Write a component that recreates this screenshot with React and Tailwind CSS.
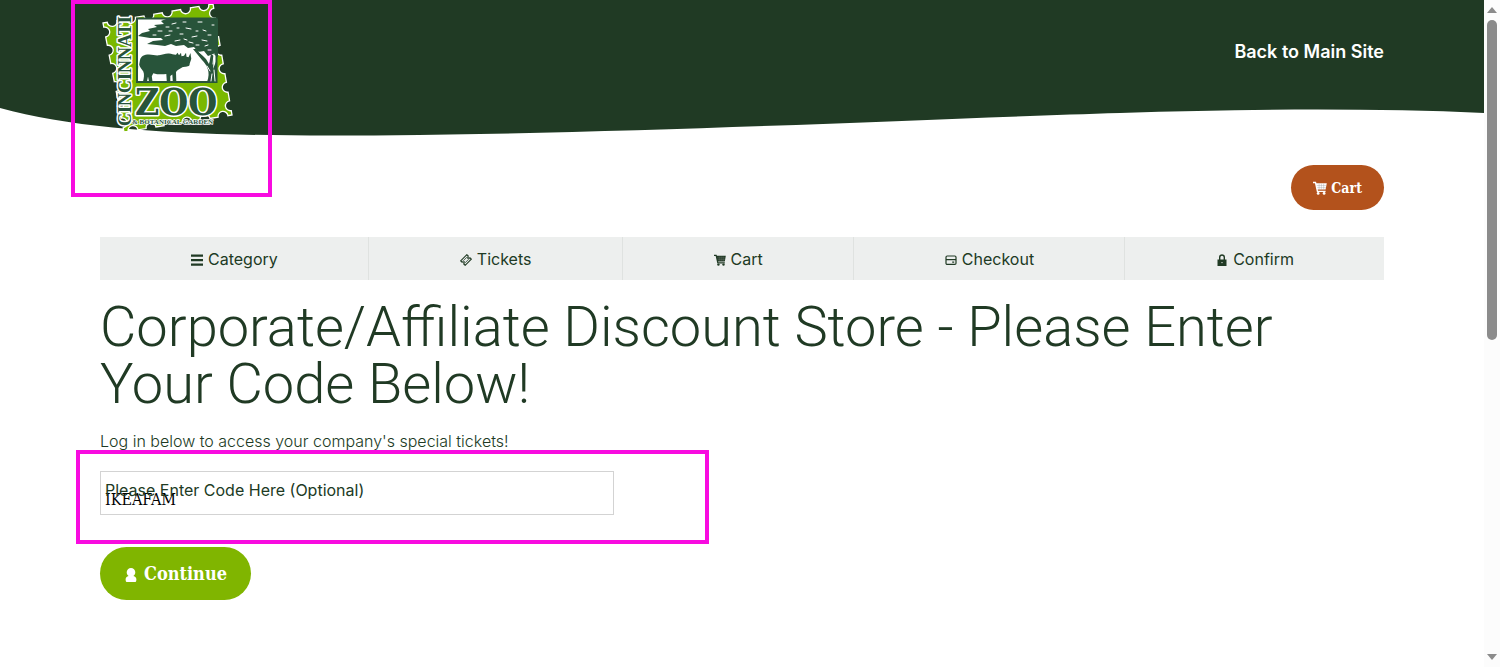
import React, { useState } from "react";

const steps = [
  { label: "Category", icon: MenuIcon },
  { label: "Tickets", icon: TicketIcon },
  { label: "Cart", icon: CartIcon },
  { label: "Checkout", icon: CardIcon },
  { label: "Confirm", icon: LockIcon },
];

// Builds the outline of a postage stamp: straight edges with round bites
function stampPath(corners, bites, radius) {
  let d = `M${corners[0][0]} ${corners[0][1]}`;
  corners.forEach(([x1, y1], i) => {
    const [x2, y2] = corners[(i + 1) % corners.length];
    const length = Math.hypot(x2 - x1, y2 - y1);
    const ux = (x2 - x1) / length;
    const uy = (y2 - y1) / length;
    for (let n = 0; n < bites; n++) {
      const mid = ((n + 0.5) * length) / bites;
      const a = mid - radius;
      const b = mid + radius;
      d += `L${x1 + ux * a} ${y1 + uy * a}`;
      d += `A${radius} ${radius} 0 0 0 ${x1 + ux * b} ${y1 + uy * b}`;
    }
    d += `L${x2} ${y2}`;
  });
  return d + "Z";
}

const stamp = stampPath(
  [
    [3, 23],
    [113, 4],
    [132, 115],
    [24, 132],
  ],
  6,
  5
);

function MenuIcon({ className }) {
  return (
    <svg viewBox="0 0 12 12" className={className} fill="currentColor">
      <path d="M0 .5h12v2.200H0zM0 5h12v2.200H0zM0 9.500h12v2.200H0z" />
    </svg>
  );
}

function TicketIcon({ className }) {
  return (
    <svg
      viewBox="0 0 14 14"
      className={className}
      fill="none"
      stroke="currentColor"
      strokeWidth="1.300"
    >
      <path d="M.8 8 8 .8l1.600 1.600a1.400 1.400 0 0 0 2 2L13.200 6 6 13.200l-1.600-1.600a1.400 1.400 0 0 0-2-2z" />
      <path d="M4 7.800 7.800 4 10 6.200 6.200 10z" strokeWidth=".9" />
    </svg>
  );
}

function CartIcon({ className }) {
  return (
    <svg viewBox="0 0 13 13" className={className} fill="currentColor">
      <path d="M0 .8h2.800l.4 1.200h9.600L11.700 8H4.400l.3 1h7v1.200H3.600L1.800 2.200H0z" />
      <circle cx="4.800" cy="11.500" r="1.300" />
      <circle cx="10.300" cy="11.500" r="1.300" />
      <path
        d="M3.500 4.200h8.500M4 6.100h8M5.700 2.500v5.500M7.800 2.500v5.500M9.900 2.500v5.500"
        stroke="#8f8f8f"
        strokeOpacity=".6"
        strokeWidth=".5"
      />
    </svg>
  );
}

function CardIcon({ className }) {
  return (
    <svg
      viewBox="0 0 12 12"
      className={className}
      fill="none"
      stroke="currentColor"
      strokeWidth="1.200"
    >
      <rect x="1" y="2" width="10" height="8.400" rx="1.200" />
      <path d="M1 5.600h10M7.200 8.200h2" />
    </svg>
  );
}

function LockIcon({ className }) {
  return (
    <svg viewBox="0 0 12 12" className={className} fill="currentColor">
      <path d="M1.500 5.500h9V12h-9z" />
      <path
        d="M3.700 6V3.300a2.300 2.300 0 0 1 4.600 0V6"
        fill="none"
        stroke="currentColor"
        strokeWidth="1.400"
      />
      <circle cx="6" cy="8.600" r=".7" fill="#edefee" />
    </svg>
  );
}

function UserIcon({ className }) {
  return (
    <svg viewBox="0 0 12 14" className={className} fill="currentColor">
      <path d="M6 0a4.300 4.300 0 0 1 4.300 4.300c0 1.600-.8 2.900-1.900 3.700 1.900.6 3 1.800 3 3.500 0 1-.4 2.500-1 2.500H1.600c-.6 0-1-1.500-1-2.500 0-1.700 1.100-2.900 3-3.500-1.100-.8-1.900-2.100-1.900-3.700A4.300 4.300 0 0 1 6 0z" />
    </svg>
  );
}

function ZooLogo() {
  return (
    <svg
      width="140"
      height="136"
      viewBox="0 0 140 136"
      role="img"
      aria-label="Cincinnati Zoo & Botanical Garden"
    >
      <path d={stamp} fill="#7ab800" stroke="#fff" strokeWidth="1.300" />

      {/* Picture panel */}
      <rect
        x="37"
        y="18.500"
        width="79.500"
        height="63.500"
        fill="#fff"
        stroke="#28543a"
        strokeWidth="2"
      />
      {/* Acacia canopy */}
      <g fill="#28543a">
        <path d="M38 36 42 33 50 31 48 29 57 27 54 25 64 24 61 21 66 19H118V57L113 54 108 56 104 51 98 52 94 47 88 48 84 45 76 46 71 44 65 46 57 45 47 44 53 41 63 40 61 38 50 38Z" />
        <path d="M107 82C111 72 107 65 102 60L93 49 96 49 106 59 109 64 111 54 114 56 113 69 117 59V82Z" />
      </g>
      <g stroke="#fff" fill="none" strokeLinecap="round">
        <path
          d="M58 31h4M72 24l4-1M86 28l5 1M65 36l5-1M80 34h3M92 37l5-1M103 30l3 1M98 22h4M75 41l5-1M89 42l4 1M102 40l5 1M105 46l3-1M83 22h3M112 25h2M108 35h3M96 45h3M69 31h3M84 39l3 1M77 28h2M96 31h2M108 50h3M53 35h3M66 27h3"
          strokeWidth="1"
        />
        <path
          d="M99 52 107 58M104 53 109 61M111 81 112 74M115 81 114 70M114 54 113 64M107 66 110 71"
          strokeWidth="1"
        />
      </g>
      {/* Rhino */}
      <path
        d="M40 60c1-4 4-5.500 9-5.500 4 0 6 1.200 10 .8 4-.8 6-2 10-1.800 3 .2 5 1.500 7 1.200l1.500-2 1.500 2.500 2-2.500.5 3.500 2.500-.5 2-3 .5 4 2 .5 2-4.200.5 4.200c1 2-1 4-1.500 8-2 2.300-5 .8-7.500 2.300-3 2-5 2.500-6 4.500l.3 9.500h-3.500l-.5-7-2 1.500v5.500h-3.500l-.5-7.500c-4 .5-9 .6-13-.8l-1.500 3 .7 5.300h-3.500l-1-5-1 5h-4c1-4 1.500-7 .3-10-2-3-3.500-4-3.800-7l-1.200 5z"
        fill="#28543a"
      />

      {/* Lettering */}
      <g
        fill="#28543a"
        stroke="#fff"
        paintOrder="stroke"
        strokeLinejoin="round"
        fontWeight="700"
      >
        <text
          x="35"
          y="115"
          fontSize="37"
          strokeWidth="3"
          fontFamily="'DejaVu Serif Condensed', 'DejaVu Serif', serif"
        >
          ZOO
        </text>
        <text
          transform="translate(31 126) rotate(-90)"
          fontSize="18"
          strokeWidth="3"
          fontFamily="'Liberation Serif', serif"
        >
          CINCINNATI
        </text>
        <text
          x="32"
          y="124"
          fontSize="7"
          strokeWidth="1.500"
          fontFamily="'Liberation Serif', serif"
        >
          &amp; BOTANICAL GARDEN
        </text>
      </g>
    </svg>
  );
}

function Header() {
  return (
    <header className="relative flex h-[136px] items-start justify-between px-[100px]">
      <svg
        className="absolute inset-0 h-full w-full"
        viewBox="0 0 1484 136"
        preserveAspectRatio="none"
        aria-hidden="true"
      >
        <path
          d="M0 0H1484V113C1370 108 1250 109 1120 113C920 119 600 135.500 330 135.500C190 135.500 80 130 0 108Z"
          fill="#203a24"
        />
      </svg>
      <a href="#home" className="relative">
        <ZooLogo />
      </a>
      <a
        href="#main"
        className="relative mt-10 text-lg leading-6 font-semibold text-white"
      >
        Back to Main Site
      </a>
      <div className="pointer-events-none absolute top-0 left-[71px] h-[197px] w-[201px] border-4 border-[#f80be0]" />
    </header>
  );
}

function Steps() {
  return (
    <nav aria-label="Order steps" className="mt-[27px]">
      <ol className="flex divide-x divide-[#dfe2e0] bg-[#edefee] text-[#203a24]">
        {steps.map(({ label, icon: Icon }) => (
          <li
            key={label}
            className="flex h-[43px] flex-auto items-center justify-center gap-1 text-base"
          >
            <Icon className="mt-0.5 size-3.5 p-px" />
            {label}
          </li>
        ))}
      </ol>
    </nav>
  );
}

function CodeForm() {
  const [code, setCode] = useState("IKEAFAM");

  return (
    <form onSubmit={(e) => e.preventDefault()}>
      <div className="relative mt-[18px] w-2/5">
        <label
          htmlFor="code"
          className="absolute top-[7px] left-[5px] text-base text-[#203a24]"
        >
          Please Enter Code Here (Optional)
        </label>
        <input
          id="code"
          type="text"
          value={code}
          onChange={(e) => setCode(e.target.value)}
          className="block h-11 w-full border border-[#d3d3d3] px-1 pt-3 font-['DejaVu_Serif_Condensed','DejaVu_Serif',serif] text-base text-black outline-none"
        />
        <div className="pointer-events-none absolute -top-[21px] -left-6 h-[94px] w-[633px] border-4 border-[#f80be0]" />
      </div>
      <button
        type="submit"
        className="mt-8 flex h-[53px] items-center gap-1.5 rounded-full bg-[#80b500] px-6 font-['DejaVu_Serif_Condensed','DejaVu_Serif',serif] text-lg font-bold text-white"
      >
        <UserIcon className="mt-0.5 size-3.5" />
        Continue
      </button>
    </form>
  );
}

function Scrollbar() {
  return (
    <div
      aria-hidden="true"
      className="flex h-screen w-4 flex-none flex-col items-center bg-[#fcfcfc] py-[7px]"
    >
      <svg viewBox="0 0 10 6" className="h-1.5 w-2.5 flex-none fill-[#8b8b8b]">
        <path d="M5 0 10 6H0z" />
      </svg>
      <div className="mt-[7px] h-[49%] w-2.5 rounded-full bg-[#8b8b8b]" />
      <svg
        viewBox="0 0 10 6"
        className="mt-auto h-1.5 w-2.5 flex-none fill-[#8b8b8b]"
      >
        <path d="M0 0H10L5 6z" />
      </svg>
    </div>
  );
}

function App() {
  return (
    <div className="flex min-h-screen bg-white font-[Inter,sans-serif]">
      <div className="min-w-0 flex-1">
        <Header />
        <main className="px-[100px] pt-[29px]">
          <div className="flex justify-end">
            <button
              type="button"
              className="flex h-[45px] items-center gap-1 rounded-full bg-[#b3521c] px-[22px] font-['DejaVu_Serif_Condensed','DejaVu_Serif',serif] text-sm font-bold text-white"
            >
              <CartIcon className="size-3.5" />
              Cart
            </button>
          </div>
          <Steps />
          <h1 className="mt-[19px] font-[Roboto,sans-serif] text-[56px] leading-[57px] font-light text-[#203a24]">
            Corporate/Affiliate Discount Store - Please Enter Your Code Below!
          </h1>
          <p className="mt-4 text-base font-light text-[#203a24]">
            Log in below to access your company's special tickets!
          </p>
          <CodeForm />
        </main>
      </div>
      <Scrollbar />
    </div>
  );
}

export default App;
